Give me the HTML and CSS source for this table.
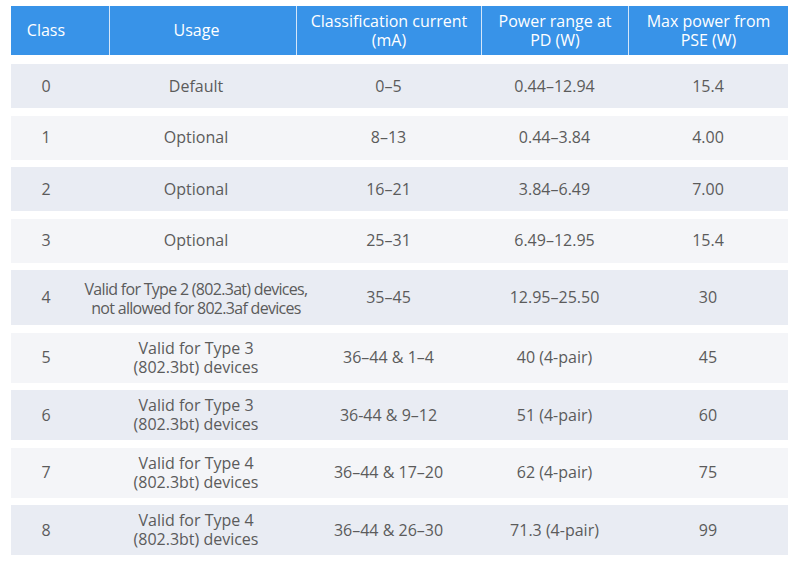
FILE: index.html
```html
<!DOCTYPE html>
<html lang="en">
<head>
<meta charset="utf-8">
<title>PoE classes</title>
<link rel="stylesheet" href="styles.css">
</head>
<body>
<div class="table">
  <div class="row head">
    <div class="cell c0">Class</div>
    <div class="cell c1">Usage</div>
    <div class="cell c2">Classification current<br>(mA)</div>
    <div class="cell c3">Power range at<br>PD (W)</div>
    <div class="cell c4">Max power from<br>PSE (W)</div>
  </div>
  <div class="row odd">
    <div class="cell c0">0</div>
    <div class="cell c1">Default</div>
    <div class="cell c2">0–5</div>
    <div class="cell c3">0.44–12.94</div>
    <div class="cell c4">15.4</div>
  </div>
  <div class="row even">
    <div class="cell c0">1</div>
    <div class="cell c1">Optional</div>
    <div class="cell c2">8–13</div>
    <div class="cell c3">0.44–3.84</div>
    <div class="cell c4">4.00</div>
  </div>
  <div class="row odd">
    <div class="cell c0">2</div>
    <div class="cell c1">Optional</div>
    <div class="cell c2">16–21</div>
    <div class="cell c3">3.84–6.49</div>
    <div class="cell c4">7.00</div>
  </div>
  <div class="row even">
    <div class="cell c0">3</div>
    <div class="cell c1">Optional</div>
    <div class="cell c2">25–31</div>
    <div class="cell c3">6.49–12.95</div>
    <div class="cell c4">15.4</div>
  </div>
  <div class="row odd tall">
    <div class="cell c0">4</div>
    <div class="cell c1 tight">Valid for Type 2 (802.3at) devices,<br>not allowed for 802.3af devices</div>
    <div class="cell c2">35–45</div>
    <div class="cell c3">12.95–25.50</div>
    <div class="cell c4">30</div>
  </div>
  <div class="row even two">
    <div class="cell c0">5</div>
    <div class="cell c1">Valid for Type 3<br>(802.3bt) devices</div>
    <div class="cell c2">36–44 &amp; 1–4</div>
    <div class="cell c3">40 (4-pair)</div>
    <div class="cell c4">45</div>
  </div>
  <div class="row odd two">
    <div class="cell c0">6</div>
    <div class="cell c1">Valid for Type 3<br>(802.3bt) devices</div>
    <div class="cell c2">36-44 &amp; 9–12</div>
    <div class="cell c3">51 (4-pair)</div>
    <div class="cell c4">60</div>
  </div>
  <div class="row even two">
    <div class="cell c0">7</div>
    <div class="cell c1">Valid for Type 4<br>(802.3bt) devices</div>
    <div class="cell c2">36–44 &amp; 17–20</div>
    <div class="cell c3">62 (4-pair)</div>
    <div class="cell c4">75</div>
  </div>
  <div class="row odd two">
    <div class="cell c0">8</div>
    <div class="cell c1">Valid for Type 4<br>(802.3bt) devices</div>
    <div class="cell c2">36–44 &amp; 26–30</div>
    <div class="cell c3">71.3 (4-pair)</div>
    <div class="cell c4">99</div>
  </div>
</div>
</body>
</html>
```
FILE: styles.css
```css
html, body {
  margin: 0;
  padding: 0;
  background: #ffffff;
}
body {
  padding: 6px 0 0 11px;
  font-family: "Open Sans", "DejaVu Sans", sans-serif;
  font-size: 16px;
  color: #5b5b5b;
}
.table {
  width: 777px;
  display: flex;
  flex-direction: column;
  gap: 7.5px;
}
.row {
  display: grid;
  grid-template-columns: 98px 187px 185px 147px 160px;
  height: 44px;
}
.row.two { height: 50px; }
.row.tall { height: 55px; }
.row.odd { background: #e9ecf3; }
.row.even { background: #f4f5f8; }
.row.head {
  height: 49px;
  background: #3893e8;
  color: #ffffff;
  margin-bottom: 1.5px;
}
.head .cell + .cell {
  border-left: 1px solid #d4e6f9;
}
.cell {
  display: flex;
  align-items: center;
  justify-content: center;
  text-align: center;
  line-height: 19px;
  white-space: nowrap;
  min-width: 0;
}
.c0 { padding-right: 28px; }
.c1 { padding-right: 13px; }
.tight {
  letter-spacing: -0.7px;
  padding-top: 2px;
}
```
